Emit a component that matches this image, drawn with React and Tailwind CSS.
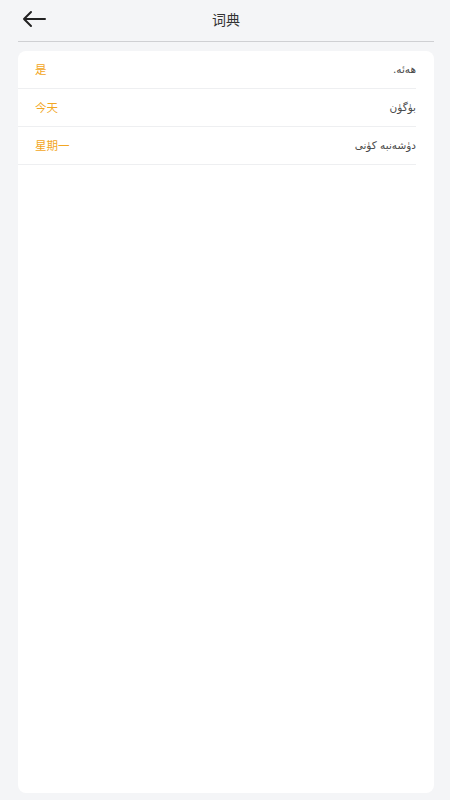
const words = [
  { zh: "是", ug: "ھەئە." },
  { zh: "今天", ug: "بۈگۈن" },
  { zh: "星期一", ug: "دۈشەنبە كۈنى" },
];

export default function App() {
  return (
    <div
      className="h-[800px] bg-[#f4f5f7] flex flex-col"
      style={{ fontFamily: '"Noto Sans", "Noto Sans CJK SC", "DejaVu Sans", sans-serif' }}
    >
      {/* Header */}
      <div className="ml-[18px] mr-[16px] h-[42px] shrink-0 relative flex items-center justify-center border-b border-[#cfd0d3]">
        <button type="button" className="absolute left-[4px] top-[9px] w-[24px] h-[20px]">
          <svg width="24" height="20" viewBox="0 0 24 20" fill="none">
            <path
              d="M23 10H2M9 3L2 10L9 17"
              stroke="#222"
              strokeWidth="2"
              strokeLinecap="round"
              strokeLinejoin="round"
            />
          </svg>
        </button>
        <div className="text-[14px] text-[#333] -mt-[2px]">词典</div>
      </div>

      {/* Card */}
      <div className="ml-[18px] mr-[16px] mt-[9px] mb-[7px] flex-1 bg-white rounded-[8px]">
        {words.map((w) => (
          <div
            key={w.zh}
            className="mr-[18px] h-[38px] flex items-center justify-between border-b border-[#eeeff1]"
          >
            <span className="pl-[17px] pt-[1px] text-[11.5px] text-[#f2a623]">{w.zh}</span>
            <span
              dir="rtl"
              className="text-[10.5px] text-[#4a4a4a]"
              style={{ fontFamily: '"DejaVu Sans", sans-serif' }}
            >
              {w.ug}
            </span>
          </div>
        ))}
      </div>
    </div>
  );
}
